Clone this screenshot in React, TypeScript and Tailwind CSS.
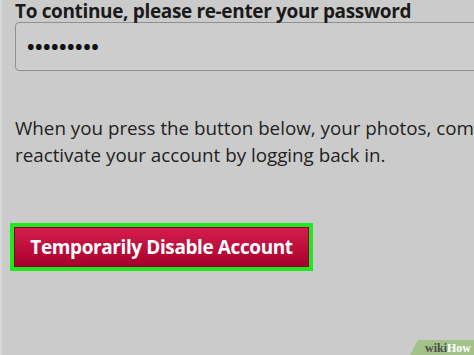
import React from "react";

export default function App() {
  return (
    <div className="relative w-[474px] h-[355px] overflow-hidden bg-[#cbcbcb] border-l-2 border-[#d6d6d6]" style={{ fontFamily: '"Open Sans", "Noto Sans", sans-serif' }}>
      <div className="pl-[13px]">
        <h1 className="text-[19px] leading-[20px] font-bold text-[#1a1a1a] whitespace-nowrap mt-[1px] tracking-[-0.35px]">
          To continue, please re-enter your password
        </h1>
        <div className="mt-[1px] w-[480px] h-[49px] rounded-[4px] border border-[#8f8f8f] bg-[#cdcdcd] flex items-center pl-[11px]">
          <span className="text-[#111] text-[20px] font-bold tracking-[0.5px] leading-none">•••••••••</span>
        </div>
        <p className="mt-[44px] text-[18.8px] leading-[27px] text-[#222] whitespace-nowrap">
          When you press the button below, your photos, comments and likes will be hidden until you
          <br />
          reactivate your account by logging back in.
        </p>
        <div className="mt-[54px] ml-[-5px] inline-flex border-[4px] border-[#1fe81f]">
          <button className="w-[295px] h-[40px] bg-gradient-to-b from-[#d41c4d] to-[#a8002e] text-white text-[19px] font-bold flex items-center justify-center border border-[#8a0022] tracking-[-0.4px]">
            Temporarily Disable Account
          </button>
        </div>
      </div>
      <div
        className="absolute right-0 bottom-0 w-[64px] h-[15px] bg-[#a3c28a] flex items-center justify-end pr-[3px]"
        style={{ clipPath: "polygon(8px 0, 100% 0, 100% 100%, 0 100%)" }}
      >
        <span className="text-[12px] font-bold leading-none" style={{ fontFamily: '"Liberation Serif", serif' }}>
          <span className="text-[#4d4d4d]">wiki</span>
          <span className="text-white">How</span>
        </span>
      </div>
    </div>
  );
}
